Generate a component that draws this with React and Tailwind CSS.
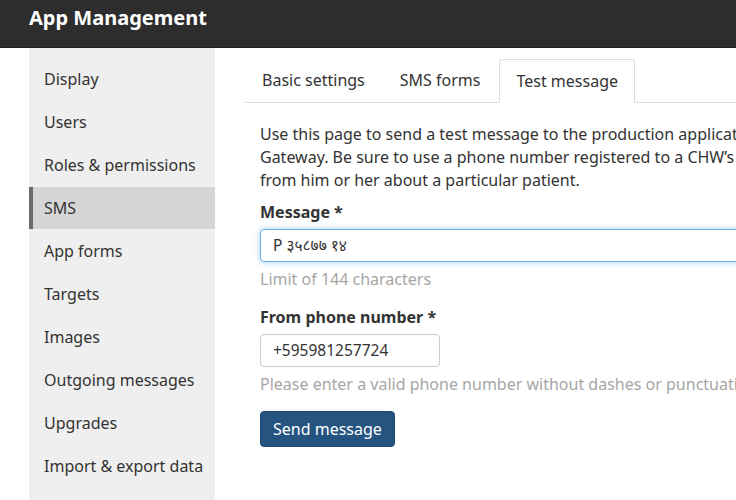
import React from "react";

const menu = [
  "Display",
  "Users",
  "Roles & permissions",
  "SMS",
  "App forms",
  "Targets",
  "Images",
  "Outgoing messages",
  "Upgrades",
  "Import & export data",
];

export default function App() {
  return (
    <div
      className="w-[736px] h-[500px] overflow-hidden bg-white text-[#333] flex flex-col"
      style={{ fontFamily: '"Noto Sans", "Open Sans", sans-serif' }}
    >
      <header className="h-12 shrink-0 bg-[#2d2d2d] border-b border-[#1f1f1f] flex items-center px-[29px]">
        <h1 className="text-white text-[20px] font-bold -mt-[12px]">App Management</h1>
      </header>

      <div className="flex flex-1 pl-[29px]">
        <nav className="w-[186px] shrink-0 bg-[#efefef] pt-[10px]">
          {menu.map((item) =>
            item === "SMS" ? (
              <div
                key={item}
                className="h-[42px] mb-px flex items-center pl-[11px] border-l-4 border-[#6b6b6b] bg-[#d6d6d6] text-[16px]"
              >
                {item}
              </div>
            ) : (
              <div key={item} className="h-[43px] flex items-center pl-[15px] text-[16px]">
                <span className="-mt-[1px]">{item}</span>
              </div>
            )
          )}
        </nav>

        <main className="ml-[30px] flex-1 min-w-[640px] pt-[11px]">
          <div className="flex border-b border-[#ddd] text-[16px] pl-px">
            <div className="px-4 h-11 flex items-center mr-[3px] -mt-[1px]">Basic settings</div>
            <div className="px-4 h-11 flex items-center mr-[3px] -mt-[1px]">SMS forms</div>
            <div className="px-4 h-11 flex items-center bg-white border border-[#ddd] border-b-white rounded-t-[4px] -mb-px">
              <span className="-mt-[1px]">Test message</span>
            </div>
          </div>

          <div className="pl-[15px] pt-[20px] text-[16px]">
            <p className="leading-[23px] whitespace-nowrap">
              Use this page to send a test message to the production application via the SMS
              <br />
              Gateway. Be sure to use a phone number registered to a CHW’s account to simulate
              <br />
              from him or her about a particular patient.
            </p>

            <label className="block font-bold mt-[10px] leading-[21px]">Message *</label>
            <div className="mt-[6px] h-[33px] w-[620px] border border-[#66afe9] rounded-[4px] shadow-[0_0_6px_rgba(102,175,233,0.6)] flex items-center px-[12px] text-[15.5px]">
              P ३५८७७ १४
            </div>
            <p className="mt-[7px] text-[#a6a6a6] leading-[20px]">Limit of 144 characters</p>

            <label className="block font-bold mt-[18px] leading-[21px]">From phone number *</label>
            <div className="mt-[6px] h-[33px] w-[180px] border border-[#ccc] rounded-[4px] flex items-center px-[12px] text-[15.5px]">
              +595981257724
            </div>
            <p className="mt-[7px] text-[#a6a6a6] leading-[20px] whitespace-nowrap">
              Please enter a valid phone number without dashes or punctuation.
            </p>

            <button className="mt-[17px] h-9 px-[12px] bg-[#24547f] text-white rounded-[4px] text-[16px] border border-[#1e4a70]">
              Send message
            </button>
          </div>
        </main>
      </div>
    </div>
  );
}
